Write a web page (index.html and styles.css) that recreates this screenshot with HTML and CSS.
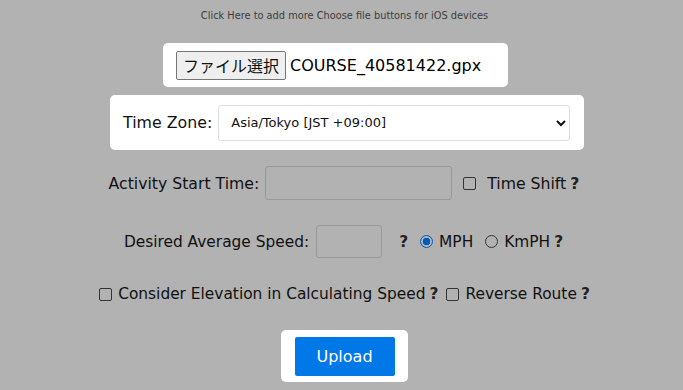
FILE: index.html
```html
<!DOCTYPE html>
<html lang="en">
<head>
	<meta charset="UTF-8">
	<meta name="viewport" content="width=device-width, initial-scale=1.0">
	<title>GPX Upload</title>
	<link rel="stylesheet" href="styles.css">
</head>
<body>
	<div class="form-wrap">
		<a href="#" class="hint">Click Here to add more Choose file buttons for iOS devices</a>

		<div class="spot spot-file">
			<button type="button" class="btn-file">ファイル選択</button>
			<span class="file-name">COURSE_40581422.gpx</span>
		</div>

		<div class="spot spot-zone">
			<label class="lbl" for="tz">Time Zone:</label>
			<select id="tz" class="sel-zone">
				<option>Asia/Tokyo [JST +09:00]</option>
			</select>
		</div>

		<div class="row row-start">
			<label class="lbl" for="start">Activity Start Time:</label>
			<input type="text" id="start" class="inp inp-start">
			<input type="checkbox" id="shift" class="chk chk-shift">
			<label for="shift" class="lbl lbl-shift">Time Shift</label>
			<b class="q">?</b>
		</div>

		<div class="row row-speed">
			<label class="lbl" for="speed">Desired Average Speed:</label>
			<input type="text" id="speed" class="inp inp-speed">
			<b class="q q-speed">?</b>
			<input type="radio" name="unit" id="mph" class="rad" checked>
			<label for="mph" class="lbl">MPH</label>
			<input type="radio" name="unit" id="kmph" class="rad rad-km">
			<label for="kmph" class="lbl">KmPH</label>
			<b class="q">?</b>
		</div>

		<div class="row row-opts">
			<input type="checkbox" id="elev" class="chk">
			<label for="elev" class="lbl">Consider Elevation in Calculating Speed</label>
			<b class="q">?</b>
			<input type="checkbox" id="rev" class="chk chk-rev">
			<label for="rev" class="lbl">Reverse Route</label>
			<b class="q">?</b>
		</div>

		<div class="spot spot-upload">
			<button type="submit" class="btn-upload">Upload</button>
		</div>
	</div>
</body>
</html>
```

FILE: styles.css
```css
body{
	margin: 0; background-color: #b2b2b2; color: #111;
	font-family: "DejaVu Sans", Verdana, sans-serif; font-size: 16px;
}
.form-wrap{
	width: 683px; height: 390px; display: flex; flex-direction: column; align-items: center;
}
.hint{
	margin-top: 9px; font-size: 9.8px; color: #3d3d3d; text-decoration: none; line-height: 14px; margin-left: 6px;
}
.spot{
	background-color: #fff; border-radius: 5px; display: flex; align-items: center;
}
.spot-file{
	margin-top: 20px; height: 44px; padding: 0 14px 0 13px; box-sizing: border-box; width: 345px; margin-left: -12px;
}
.btn-file{
	font-family: "Noto Sans CJK JP", sans-serif; font-size: 16px; color: #111;
	height: 29px; padding: 0 6px; border: 1px solid #767676; border-radius: 2px;
	background-color: #efefef; line-height: 27px;
}
.file-name{ margin-left: 4px; font-size: 16px; color: #000; }
.spot-zone{
	margin-top: 8px; width: 474px; height: 55px; padding: 0 14px 0 13px; box-sizing: border-box; margin-left: 11px;
}
.spot-zone .lbl{ font-size: 15.8px; }
.sel-zone{
	margin-left: 6px; flex: 1; height: 36px; border: 1px solid #ddd; border-radius: 3px;
	background-color: #fff; font-family: "DejaVu Sans", Verdana, sans-serif; font-size: 13px;
	padding: 0 8px; color: #111;
}
.row{ display: flex; align-items: center; font-size: 15.4px; }
.lbl{ color: #111; }
.row-start{ margin-top: 16px; height: 34px; margin-left: 5px; font-size: 15.7px; }
.inp{
	border: 1px solid #999; border-radius: 3px; background-color: #b2b2b2; box-sizing: border-box;
}
.inp-start{ width: 187px; height: 34px; margin-left: 6px; }
.chk{
	appearance: none; width: 13px; height: 13px; margin: 0; border: 1px solid #333;
	border-radius: 2px; background-color: #b2b2b2; box-sizing: border-box;
}
.chk-shift{ margin-left: 11px; }
.lbl-shift{ margin-left: 11px; }
.q{ font-weight: bold; color: #222; margin-left: 4px; }
.row-speed{ margin-top: 25px; height: 33px; margin-left: 4px; }
.inp-speed{ width: 66px; height: 33px; margin-left: 7px; }
.q-speed{ margin-left: 17px; }
.rad{
	appearance: none; width: 13px; height: 13px; margin: 0 6px 0 12px; border: 1px solid #333;
	border-radius: 50%; background-color: #b2b2b2; box-sizing: border-box;
}
.rad:checked{
	border: 1px solid #005bbf; background: radial-gradient(circle, #005bbf 0 3.5px, #b2b2b2 4px);
}
.rad-km{ margin-left: 12px; }
.row-opts{ margin-top: 27px; height: 18px; margin-left: 6px; }
.row-opts .chk{ margin-right: 6px; }
.chk-rev{ margin-left: 8px; }
.spot-upload{
	margin-top: 27px; width: 127px; height: 52px; justify-content: center; margin-left: 6px;
}
.btn-upload{
	width: 100px; height: 39px; border: none; border-radius: 2px; background-color: #0078e7;
	color: #fff; font-family: "DejaVu Sans", Verdana, sans-serif; font-size: 16px;
}
```
